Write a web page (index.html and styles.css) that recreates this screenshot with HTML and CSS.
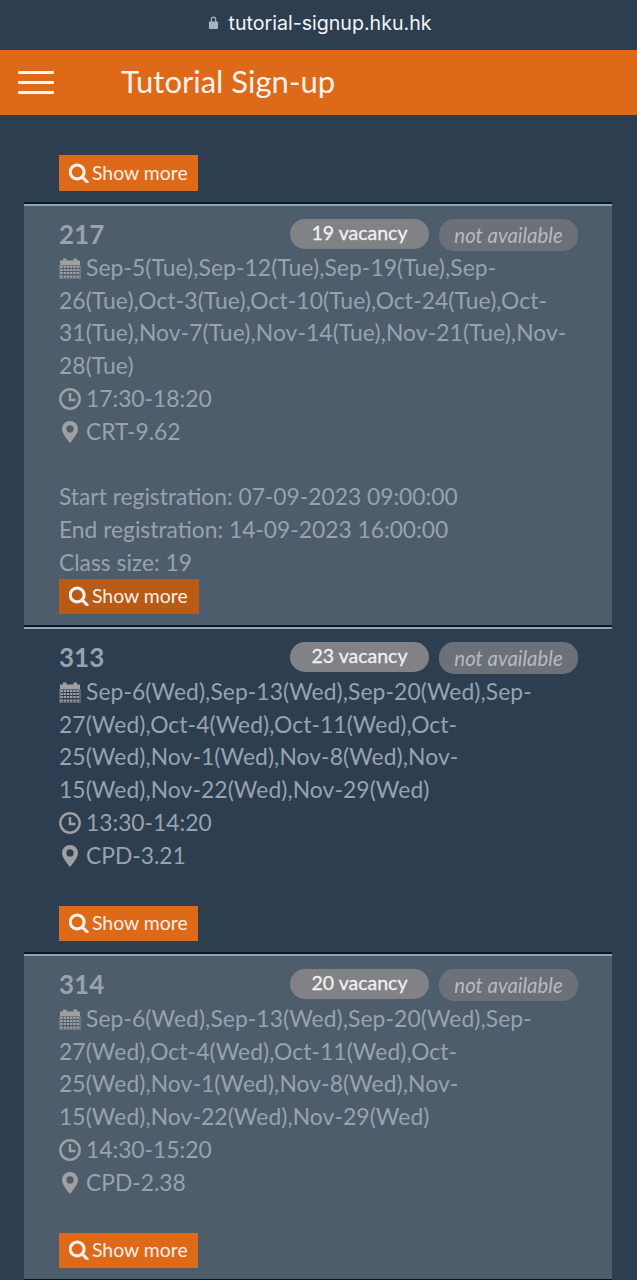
FILE: index.html
```html
<!DOCTYPE html>
<html lang="en">
<head>
<meta charset="utf-8">
<title>Tutorial Sign-up</title>
<link rel="stylesheet" href="styles.css">
</head>
<body>
<svg class="defs" width="0" height="0" aria-hidden="true">
  <symbol id="i-search" viewBox="90 90 1660 1660"><path d="M1216 832q0-185-131.500-316.500t-316.500-131.500-316.500 131.500-131.500 316.500 131.500 316.500 316.500 131.500 316.500-131.500 131.500-316.500zm512 832q0 52-38 90t-90 38q-54 0-90-38l-343-342q-179 124-399 124-143 0-273.500-55.500t-225-150-150-225-55.500-273.500 55.500-273.500 150-225 225-150 273.500-55.500 273.500 55.500 225 150 150 225 55.500 273.500q0 220-124 399l343 343q37 37 37 90z"/></symbol>
  <symbol id="i-cal" viewBox="0 0 22 22"><path d="M1 3.500h3V1.500h3.500v2h7v-2H18v2h3V8H1z"/><path d="M1 8h20v14H1z" fill="none" stroke="currentColor" stroke-width=".8"/><path d="M1.500 10H20.500M1.500 13H20.500M1.500 16H20.500M1.500 19.700H20.500" fill="none" stroke="currentColor" stroke-width="2.200" stroke-dasharray="2.400 .8"/></symbol>
  <symbol id="i-clock" viewBox="0 0 22 22"><circle cx="11" cy="11" r="9.700" fill="none" stroke="currentColor" stroke-width="2.400"/><path d="M11 5v7h5.500" fill="none" stroke="currentColor" stroke-width="2.400"/></symbol>
  <symbol id="i-pin" viewBox="0 0 22 22"><path fill-rule="evenodd" d="M11 0a8 8 0 0 1 8 8c0 4.500-4.800 9.800-8 14C7.800 17.800 3 12.500 3 8a8 8 0 0 1 8-8zm0 4.300a3.600 3.600 0 1 0 0 7.200 3.600 3.600 0 0 0 0-7.200z"/></symbol>
</svg>

<div class="urlbar">
  <svg class="lock" viewBox="0 0 12 16"><path d="M3 7V4.500a3 3 0 0 1 6 0V7h1.200a.8.800 0 0 1 .8.800v6.400a.8.800 0 0 1-.8.800H1.800a.8.800 0 0 1-.8-.8V7.800A.8.800 0 0 1 1.800 7zm1.300 0h3.400V4.500a1.700 1.700 0 0 0-3.400 0z"/></svg>
  <span>tutorial-signup.hku.hk</span>
</div>

<header class="topbar">
  <div class="burger"><i></i><i></i><i></i></div>
  <h1>Tutorial Sign-up</h1>
</header>

<main class="content">
  <div class="top-action">
    <a class="btn"><svg class="ic-search"><use href="#i-search"/></svg>Show more</a>
  </div>

  <section class="row row-alt">
    <div class="head">
      <h2>217</h2>
      <div class="badges"><span class="badge">19 vacancy</span><span class="badge muted">not available</span></div>
    </div>
    <div class="line dates"><svg class="ic"><use href="#i-cal"/></svg>Sep-5(Tue),Sep-12(Tue),Sep-19(Tue),Sep-26(Tue),Oct-3(Tue),Oct-10(Tue),Oct-24(Tue),Oct-31(Tue),Nov-7(Tue),Nov-14(Tue),Nov-21(Tue),Nov-28(Tue)</div>
    <div class="line"><svg class="ic"><use href="#i-clock"/></svg>17:30-18:20</div>
    <div class="line"><svg class="ic"><use href="#i-pin"/></svg>CRT-9.62</div>
    <div class="line blank"></div>
    <div class="line">Start registration: 07-09-2023 09:00:00</div>
    <div class="line">End registration: 14-09-2023 16:00:00</div>
    <div class="line">Class size: 19</div>
    <a class="btn btn-dark"><svg class="ic-search"><use href="#i-search"/></svg>Show more</a>
  </section>

  <section class="row">
    <div class="head">
      <h2>313</h2>
      <div class="badges"><span class="badge">23 vacancy</span><span class="badge muted">not available</span></div>
    </div>
    <div class="line dates"><svg class="ic"><use href="#i-cal"/></svg>Sep-6(Wed),Sep-13(Wed),Sep-20(Wed),Sep-27(Wed),Oct-4(Wed),Oct-11(Wed),Oct-25(Wed),Nov-1(Wed),Nov-8(Wed),Nov-15(Wed),Nov-22(Wed),Nov-29(Wed)</div>
    <div class="line"><svg class="ic"><use href="#i-clock"/></svg>13:30-14:20</div>
    <div class="line"><svg class="ic"><use href="#i-pin"/></svg>CPD-3.21</div>
    <div class="line blank"></div>
    <a class="btn"><svg class="ic-search"><use href="#i-search"/></svg>Show more</a>
  </section>

  <section class="row row-alt">
    <div class="head">
      <h2>314</h2>
      <div class="badges"><span class="badge">20 vacancy</span><span class="badge muted">not available</span></div>
    </div>
    <div class="line dates"><svg class="ic"><use href="#i-cal"/></svg>Sep-6(Wed),Sep-13(Wed),Sep-20(Wed),Sep-27(Wed),Oct-4(Wed),Oct-11(Wed),Oct-25(Wed),Nov-1(Wed),Nov-8(Wed),Nov-15(Wed),Nov-22(Wed),Nov-29(Wed)</div>
    <div class="line"><svg class="ic"><use href="#i-clock"/></svg>14:30-15:20</div>
    <div class="line"><svg class="ic"><use href="#i-pin"/></svg>CPD-2.38</div>
    <div class="line blank"></div>
    <a class="btn"><svg class="ic-search"><use href="#i-search"/></svg>Show more</a>
  </section>
  <div class="list-end"></div>
</main>
</body>
</html>
```
FILE: styles.css
```css
* { box-sizing: border-box; }
html, body { margin: 0; height: 1280px; overflow: hidden; }
body { background: #2c3e50; font-family: Lato, "Open Sans", sans-serif; color: #fff; }
.defs { position: absolute; }

.urlbar { height: 50px; display: flex; align-items: center; justify-content: center; gap: 10px; padding: 0 0 5px 2px; font-family: Inter, Roboto, sans-serif; font-size: 19.600px; color: #f2f4f6; }
.lock { width: 11px; height: 15px; fill: #aab2bd; }

.topbar { height: 65px; background: #dd6919; display: flex; align-items: center; padding-left: 18px; }
.burger { width: 36px; display: flex; flex-direction: column; gap: 7px; }
.burger i { display: block; height: 3px; background: #fdf6ef; border-radius: 1px; }
.topbar h1 { margin: 0 0 3px 67px; font-size: 31px; font-weight: 400; color: #fbf3ea; }

.content { padding: 40px 25px 0 24px; }
.top-action { padding-left: 35px; margin-bottom: 10.500px; }
.top-action .btn { height: 36px; padding-bottom: 1px; }

.btn { display: inline-flex; align-items: center; height: 35.500px; padding: 0 10px 2px; background: #dd6919; color: #f7f0ea; font-size: 19.400px; white-space: nowrap; }
.btn-dark { background: #b95a15; display: flex; width: 140px; }
.blank + .btn { margin-top: 1.600px; }
.ic-search { width: 20px; height: 20px; fill: currentColor; margin-right: 3px; }

.row { border-top: 2px solid #0e1620; padding: 1.500px 34px 11px 35px; position: relative; color: #99a2ad; }
.row::before { content: ""; display: block; height: 2px; background: #8ba4c4; margin: -1.500px -34px 0 -35px; }
.row-alt { background: #4e5d6c; }

.head { display: flex; justify-content: space-between; align-items: flex-start; height: 39.400px; }
.head h2 { margin: 12px 0 0; font-size: 26px; line-height: 32px; font-weight: 700; color: #99a2ad; }
.badges { display: flex; gap: 10px; margin-top: 13px; }
.badge { display: block; width: 139px; height: 30px; line-height: 27px; text-align: center; border-radius: 15px; background: #808285; color: #f0f0f0; font-size: 19.500px; font-weight: 400; -webkit-text-stroke: .3px #f0f0f0; }
.badge.muted { background: #6b7079; color: #b6bac0; font-style: italic; height: 32px; line-height: 32px; font-size: 20.400px; -webkit-text-stroke: 0; }

.line { font-size: 22.800px; line-height: 32.800px; }
.dates { letter-spacing: .1px; }
.head + .line { margin-top: 6px; }
.blank { height: 32.800px; }
.ic { width: 22px; height: 22px; fill: currentColor; color: #a0a0a2; vertical-align: -3px; margin-right: 5px; }

.list-end { border-top: 2px solid #0e1620; }
```
